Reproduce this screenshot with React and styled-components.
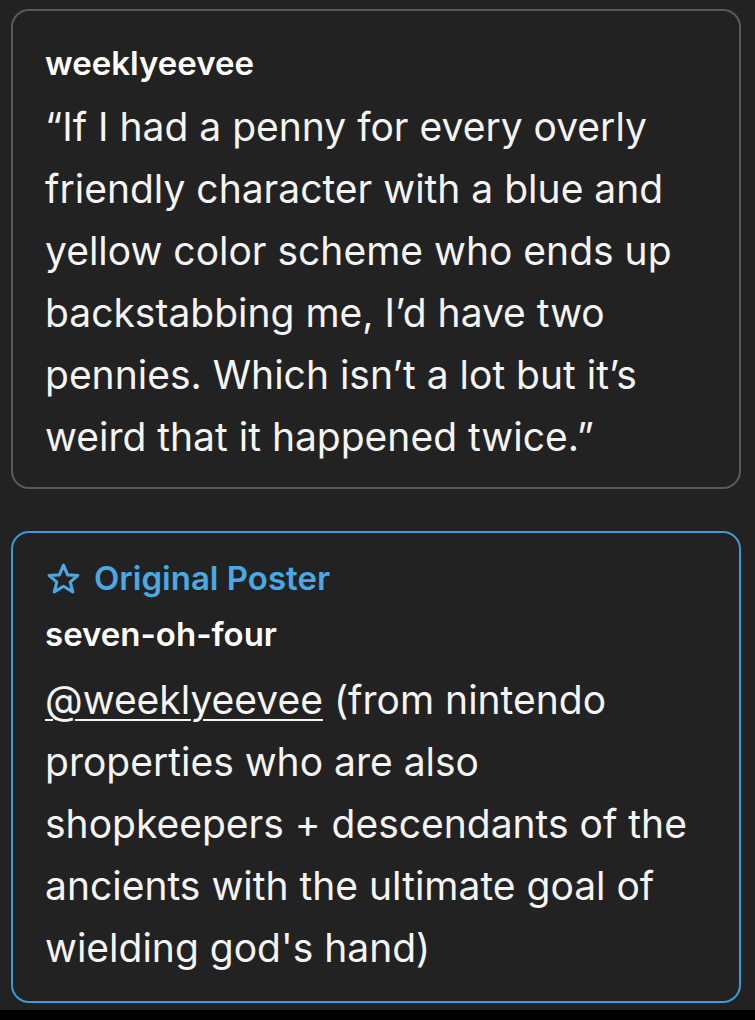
import React from "react";
import styled, { createGlobalStyle } from "styled-components";

const GlobalStyle = createGlobalStyle`
  html, body {
    margin: 0;
    padding: 0;
    background: #000;
  }
  body {
    font-family: Inter, Roboto, "Noto Sans", sans-serif;
    -webkit-font-smoothing: antialiased;
  }
`;

const Page = styled.div`
  background: #222222;
  padding: 9px 14px 7px 11px;
  display: flex;
  flex-direction: column;
  gap: 42px;
`;

const Card = styled.div`
  border: 2px solid ${({ op }) => (op ? "#3d9ad8" : "#595959")};
  border-radius: 18px;
  padding: ${({ op }) => (op ? "25px 20px 22px 32px" : "32px 20px 19px 32px")};
  display: flex;
  flex-direction: column;
`;

const Badge = styled.div`
  display: flex;
  align-items: center;
  gap: 12px;
  color: #4aa8e4;
  font-weight: 600;
  font-size: 33px;
  line-height: 40px;

  svg {
    width: 37px;
    height: 33px;
    flex: none;
  }
`;

const Name = styled.div`
  color: #fff;
  font-weight: 600;
  font-size: 33px;
  line-height: 40px;
  margin-top: ${({ gap }) => gap || 0}px;
`;

const Body = styled.p`
  margin: ${({ gap }) => gap}px 0 0;
  color: #f4f4f4;
  font-size: 39px;
  line-height: 62px;

  a {
    color: inherit;
    text-decoration: underline;
    text-underline-offset: 5px;
    text-decoration-thickness: 2px;
  }
`;

const Star = () => (
  <svg viewBox="0 0 36 32" fill="none" stroke="currentColor" strokeWidth="3" strokeLinejoin="round">
    <polygon points="18,3 22,12.5 32,13 24.5,19.5 27,29 18,23.5 9,29 11.5,19.5 4,13 14,12.5" />
  </svg>
);

export default function App() {
  return (
    <>
      <GlobalStyle />
      <Page>
        <Card>
          <Name>weeklyeevee</Name>
          <Body gap={13}>
            “If I had a penny for every overly friendly character with a blue and yellow color scheme who
            ends up backstabbing me, I’d have two pennies. Which isn’t a lot but it’s weird that it
            happened twice.”
          </Body>
        </Card>
        <Card op>
          <Badge>
            <Star />
            Original Poster
          </Badge>
          <Name gap={16}>seven-oh-four</Name>
          <Body gap={15}>
            <a href="#">@weeklyeevee</a> (from nintendo properties who are also shopkeepers + descendants
            of the ancients with the ultimate goal of wielding god's hand)
          </Body>
        </Card>
      </Page>
    </>
  );
}
